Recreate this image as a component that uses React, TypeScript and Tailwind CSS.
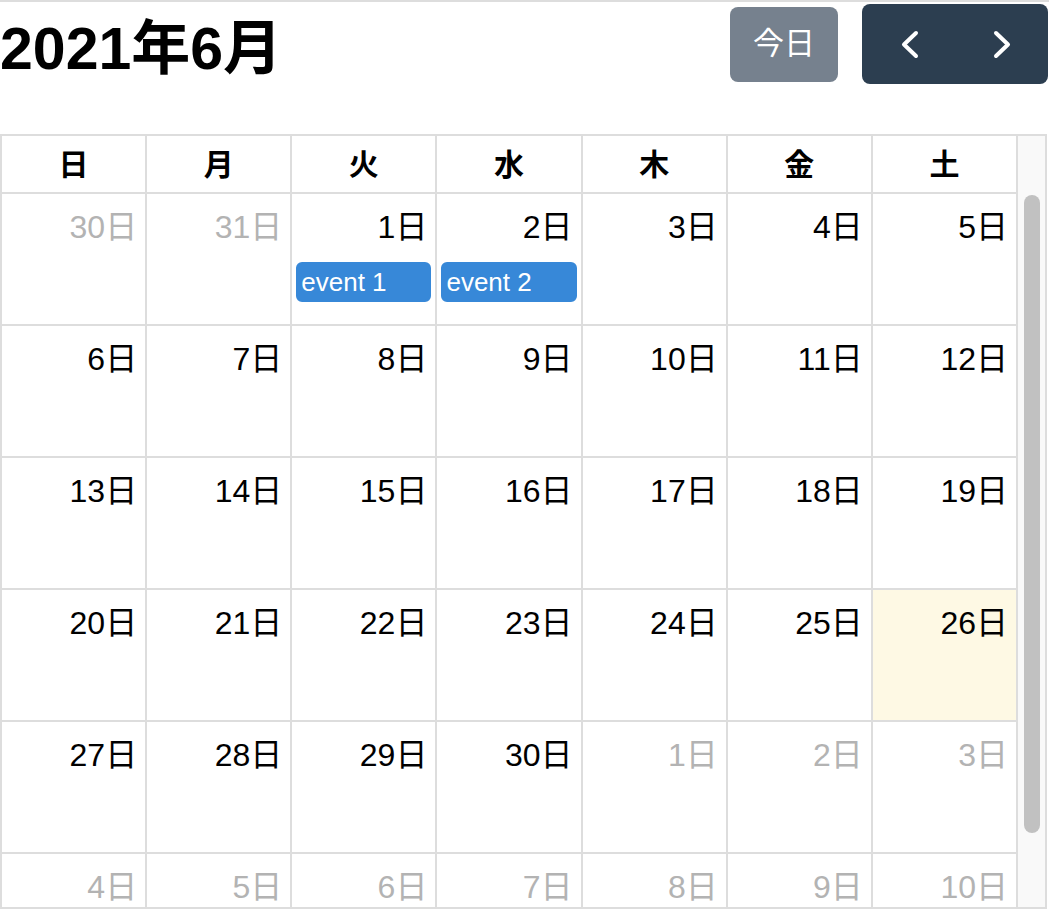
import React from "react";

type Day = { n: number; muted?: boolean; today?: boolean; event?: string };

const WEEKDAYS = ["日", "月", "火", "水", "木", "金", "土"];

const buildWeeks = (): Day[][] => {
  const days: Day[] = [
    { n: 30, muted: true },
    { n: 31, muted: true },
  ];
  for (let i = 1; i <= 30; i++) {
    days.push({
      n: i,
      today: i === 26,
      event: i === 1 ? "event 1" : i === 2 ? "event 2" : undefined,
    });
  }
  for (let i = 1; i <= 10; i++) days.push({ n: i, muted: true });
  const weeks: Day[][] = [];
  for (let i = 0; i < days.length; i += 7) weeks.push(days.slice(i, i + 7));
  return weeks;
};

const Chevron: React.FC<{ dir: "left" | "right" }> = ({ dir }) => (
  <svg width="18" height="29" viewBox="0 0 18 29" fill="none">
    <polyline
      points={dir === "left" ? "15,3 3,14.5 15,26" : "3,3 15,14.5 3,26"}
      stroke="white"
      strokeWidth="4"
      strokeLinecap="round"
      strokeLinejoin="round"
    />
  </svg>
);

const App: React.FC = () => {
  const weeks = buildWeeks();

  return (
    <div className="min-h-screen bg-white border-t-2 border-[#dddddd] font-['Liberation_Sans','Noto_Sans_CJK_JP',sans-serif] text-black">
      <div className="flex h-[84px] items-center justify-between pr-[1px] mb-[48px]">
        <h1 className="text-[59px] font-bold leading-none pt-[10px]">2021年6月</h1>
        <div className="flex items-center">
          <button
            type="button"
            className="mr-[24px] flex h-[75px] w-[108px] items-center justify-center rounded-[8px] bg-[#76818e] text-[31px] text-white"
          >
            今日
          </button>
          <div className="flex h-[80px] w-[186px] rounded-[8px] bg-[#2c3e50]">
            <button type="button" className="flex flex-1 items-center justify-center pl-[2px]">
              <Chevron dir="left" />
            </button>
            <button type="button" className="flex flex-1 items-center justify-center">
              <Chevron dir="right" />
            </button>
          </div>
        </div>
      </div>

      <div className="flex w-[1047px] border-2 border-[#dddddd]">
        <div className="flex w-[1016px] flex-col">
          <div className="grid h-[58px] grid-cols-7">
            {WEEKDAYS.map((w) => (
              <div
                key={w}
                className="flex items-center justify-center border-r-2 border-b-2 border-[#dddddd] text-[30px] font-bold"
              >
                {w}
              </div>
            ))}
          </div>
          <div className="h-[713px] overflow-hidden">
            {weeks.map((week, wi) => (
              <div key={wi} className="grid grid-cols-7">
                {week.map((day, di) => (
                  <div
                    key={di}
                    className={`h-[132px] border-r-2 border-b-2 border-[#dddddd] ${day.today ? "bg-[#fef9e4]" : ""}`}
                  >
                    <div
                      className={`pt-[14px] pr-[8px] text-right text-[32px] leading-[38px] ${day.muted ? "text-[#b3b3b3]" : "text-black"}`}
                    >
                      {day.n}日
                    </div>
                    {day.event ? (
                      <div className="mx-[4px] mt-[16px] flex h-[40px] items-center rounded-[6px] border-2 border-[#3788d8] bg-[#3788d8] pl-[3px] pt-[1px] text-[26px] text-white">
                        {day.event}
                      </div>
                    ) : null}
                  </div>
                ))}
              </div>
            ))}
          </div>
        </div>
        <div className="flex w-[27px] flex-col bg-[#f9f9f9] pt-[59px]">
          <div className="mx-auto h-[638px] w-[16px] rounded-full bg-[#c1c1c1]" />
        </div>
      </div>
    </div>
  );
};

export default App;
